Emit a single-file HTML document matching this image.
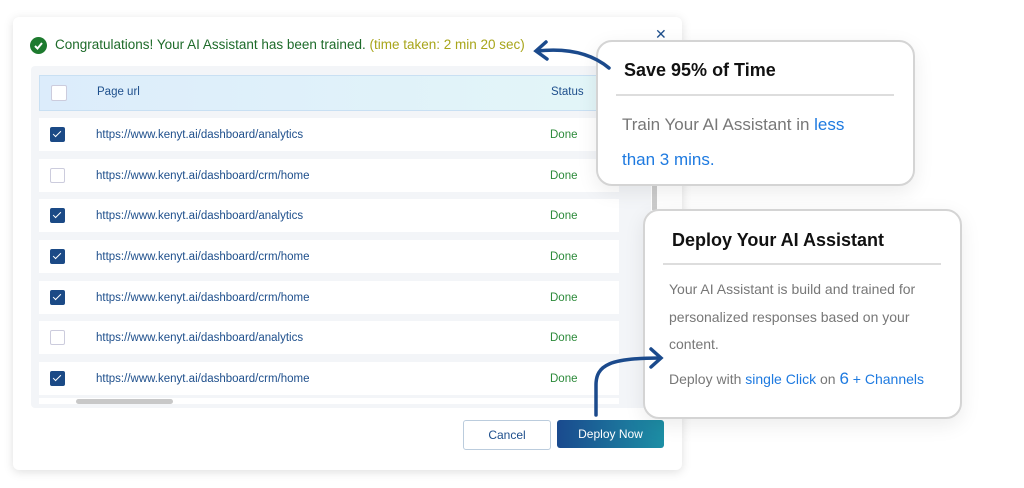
<!DOCTYPE html>
<html><head><style>
body{margin:0;width:1024px;height:488px;background:#fff;position:relative;overflow:hidden;font-family:"Liberation Sans",sans-serif;}
.modal{position:absolute;left:13px;top:17px;width:669px;height:453px;background:#fff;border-radius:6px;box-shadow:0 2px 10px rgba(0,0,0,.13);}
.msg{position:absolute;left:31px;top:37px;font-size:13.5px;color:#1e6b2a;}
.msg span{color:#a8a51a}
.chk{position:absolute;left:30px;top:37px;width:17px;height:17px;border-radius:50%;background:#1d7a2e}
.tbl{position:absolute;left:31px;top:66px;width:620px;height:342px;background:#f3f5f8;border-radius:4px}
.hdr{position:absolute;left:39px;top:75px;width:580px;height:34px;background:linear-gradient(90deg,#dcecfb,#e3f6f8);border:1px solid #c9e0f3;}
.row{position:absolute;left:39px;width:580px;height:33px;background:#fff}
.cb{position:absolute;left:11px;top:9px;width:13px;height:13px;border-radius:2px;border:1px solid #ccd;background:#fff}
.cb.on{background:#1b4a86;border-color:#1b4a86}
.cb.on:after{content:"";position:absolute;left:4px;top:1px;width:3px;height:7px;border:solid #fff;border-width:0 1.5px 1.5px 0;transform:rotate(45deg)}
.url{position:absolute;left:57px;top:11px;font-size:11.5px;color:#1e4f8c}
.st{position:absolute;left:511px;top:11px;font-size:11.5px;color:#2c8a3a}
.btn{position:absolute;top:420px;height:28px;border-radius:3px;font-size:12px;text-align:center;line-height:28px}
.card{position:absolute;background:#fff;border:2px solid #d4d4d4;border-radius:16px;box-shadow:0 6px 20px rgba(0,0,0,.08)}
.card h3{margin:0;position:absolute;font-size:18px;font-weight:bold;color:#111}
.card hr{position:absolute;border:0;border-top:2px solid #ddd;margin:0}
.card p{position:absolute;margin:0;color:#777}
.b{color:#1e7ae0}
</style></head><body>
<div class="modal"></div>
<div class="chk"><svg width="17" height="17"><path d="M5 9l2.5 2.5L12 6" stroke="#fff" stroke-width="2" fill="none"/></svg></div>
<div class="msg" style="left:55px">Congratulations! Your AI Assistant has been trained. <span>(time taken: 2 min 20 sec)</span></div>
<div style="position:absolute;left:655px;top:26px;font-size:14px;color:#1e4f8c">✕</div>
<div class="tbl"></div>
<div class="hdr"><div class="cb" style="left:11px;top:9px;width:14px;height:14px"></div><div class="url" style="top:10px">Page url</div><div class="st" style="color:#1e4f8c;top:10px">Status</div></div>
<div class="row" style="top:118px"><div class="cb on"></div><div class="url">https://www.kenyt.ai/dashboard/analytics</div><div class="st">Done</div></div>
<div class="row" style="top:159px"><div class="cb"></div><div class="url">https://www.kenyt.ai/dashboard/crm/home</div><div class="st">Done</div></div>
<div class="row" style="top:199px"><div class="cb on"></div><div class="url">https://www.kenyt.ai/dashboard/analytics</div><div class="st">Done</div></div>
<div class="row" style="top:240px"><div class="cb on"></div><div class="url">https://www.kenyt.ai/dashboard/crm/home</div><div class="st">Done</div></div>
<div class="row" style="top:281px"><div class="cb on"></div><div class="url">https://www.kenyt.ai/dashboard/crm/home</div><div class="st">Done</div></div>
<div class="row" style="top:321px"><div class="cb"></div><div class="url">https://www.kenyt.ai/dashboard/analytics</div><div class="st">Done</div></div>
<div class="row" style="top:362px"><div class="cb on"></div><div class="url">https://www.kenyt.ai/dashboard/crm/home</div><div class="st">Done</div></div>
<div style="position:absolute;left:39px;top:398px;width:580px;height:6px;background:#fff"></div>
<div style="position:absolute;left:76px;top:399px;width:97px;height:5px;border-radius:3px;background:#c8c8c8"></div>
<div style="position:absolute;left:652px;top:185px;width:5px;height:25px;background:#ccc"></div>
<div class="btn" style="left:463px;width:86px;border:1px solid #bcd;color:#1e4f8c;background:#fff">Cancel</div>
<div class="btn" style="left:557px;width:107px;background:linear-gradient(90deg,#1a4a8e,#1d8fa5);color:#fff">Deploy Now</div>
<div class="card" style="left:596px;top:40px;width:315px;height:142px">
<h3 style="left:26px;top:18px">Save 95% of Time</h3>
<hr style="left:18px;top:52px;width:278px">
<p style="left:24px;top:65px;font-size:17px;line-height:35px;width:260px">Train Your AI Assistant in <span class="b">less than 3 mins.</span></p>
</div>
<div class="card" style="left:643px;top:209px;width:315px;height:206px">
<h3 style="left:27px;top:19px">Deploy Your AI Assistant</h3>
<hr style="left:18px;top:52px;width:278px">
<p style="left:24px;top:65px;font-size:14px;line-height:27.5px;width:280px">Your AI Assistant is build and trained for personalized responses based on your content.</p>
<p style="left:24px;top:158px;font-size:14px">Deploy with <span class="b">single Click</span> on <span class="b"><span style="font-size:17px">6</span> + Channels</span></p>
</div>
<svg style="position:absolute;left:0;top:0" width="1024" height="488">
<path d="M609 68 C590 52 565 48 537 51" stroke="#1b4a8c" stroke-width="3.5" fill="none" stroke-linecap="round"/>
<path d="M546 42 L536 51 L547 59" stroke="#1b4a8c" stroke-width="3.5" fill="none" stroke-linecap="round"/>
<path d="M596 415 L596 385 C596 365 610 358 660 358" stroke="#1b4a8c" stroke-width="3.5" fill="none" stroke-linecap="round"/>
<path d="M651 349 L661 358 L651 367" stroke="#1b4a8c" stroke-width="3.5" fill="none" stroke-linecap="round"/>
</svg>
</body></html>
